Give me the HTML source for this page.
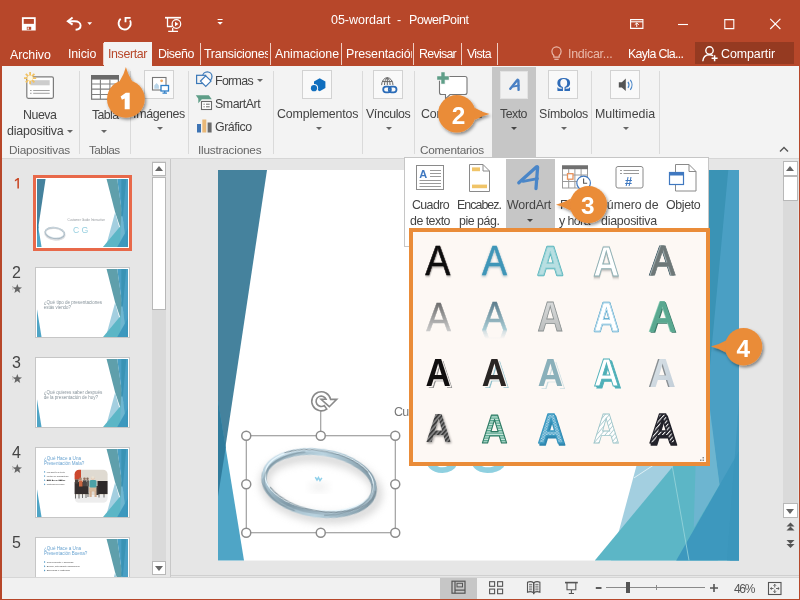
<!DOCTYPE html>
<html><head><meta charset="utf-8"><title>PowerPoint</title>
<style>
*{box-sizing:border-box;margin:0;padding:0}
html,body{width:800px;height:600px;overflow:hidden;background:#e6e6e6;font-family:"Liberation Sans",sans-serif;font-size:12px;color:#444}
#win{position:absolute;left:0;top:0;width:800px;height:600px;overflow:hidden;background:#e6e6e6}
#win div,#win svg{position:absolute}
#win .t,#win svg{will-change:transform}
</style></head><body>
<div id="win">
<!-- s_title -->
<div style="position:absolute;left:0;top:0;width:800px;height:66px;background:#b7472a"></div>
<div class="t" style="left:330.50px;top:12.00px;font-size:12.5px;line-height:16px;color:#fff;white-space:nowrap;letter-spacing:-0.034px;">05-wordart</div>
<div class="t" style="left:397.00px;top:12.00px;font-size:12.5px;line-height:16px;color:#fff;white-space:nowrap;letter-spacing:-0.162px;">-</div>
<div class="t" style="left:408.50px;top:12.00px;font-size:12.5px;line-height:16px;color:#fff;white-space:nowrap;letter-spacing:-0.442px;">PowerPoint</div>
<div style="position:absolute;left:104px;top:42px;width:48px;height:25px;background:#f3f3f3"></div>
<div style="position:absolute;left:103px;top:42.500px;width:1px;height:22px;background:#efcdc3"></div>
<div style="position:absolute;left:200px;top:42.500px;width:1px;height:22px;background:#efcdc3"></div>
<div style="position:absolute;left:270px;top:42.500px;width:1px;height:22px;background:#efcdc3"></div>
<div style="position:absolute;left:341px;top:42.500px;width:1px;height:22px;background:#efcdc3"></div>
<div style="position:absolute;left:413px;top:42.500px;width:1px;height:22px;background:#efcdc3"></div>
<div style="position:absolute;left:461px;top:42.500px;width:1px;height:22px;background:#efcdc3"></div>
<div style="position:absolute;left:497px;top:42.500px;width:1px;height:22px;background:#efcdc3"></div>
<div class="t" style="left:9.50px;top:47.00px;font-size:12.4px;line-height:16px;color:#fff;white-space:nowrap;letter-spacing:-0.078px;">Archivo</div>
<div class="t" style="left:67.50px;top:46.00px;font-size:12.4px;line-height:16px;color:#fff;white-space:nowrap;letter-spacing:-0.108px;">Inicio</div>
<div class="t" style="left:107.50px;top:46.00px;font-size:12.4px;line-height:16px;color:#b7472a;white-space:nowrap;letter-spacing:-0.379px;">Insertar</div>
<div class="t" style="left:157.50px;top:46.00px;font-size:12.4px;line-height:16px;color:#fff;white-space:nowrap;letter-spacing:-0.433px;">Diseño</div>
<div class="t" style="left:203.50px;top:46.00px;font-size:12.4px;line-height:16px;color:#fff;white-space:nowrap;letter-spacing:-0.298px;width:64px;overflow:hidden;">Transiciones</div>
<div class="t" style="left:274.50px;top:46.00px;font-size:12.4px;line-height:16px;color:#fff;white-space:nowrap;letter-spacing:-0.079px;width:64px;overflow:hidden;">Animaciones</div>
<div class="t" style="left:346.00px;top:46.00px;font-size:12.4px;line-height:16px;color:#fff;white-space:nowrap;letter-spacing:-0.089px;width:65.5px;overflow:hidden;">Presentación</div>
<div class="t" style="left:418.50px;top:46.00px;font-size:12.4px;line-height:16px;color:#fff;white-space:nowrap;letter-spacing:-0.719px;">Revisar</div>
<div class="t" style="left:467.00px;top:46.00px;font-size:12.4px;line-height:16px;color:#fff;white-space:nowrap;letter-spacing:-0.668px;">Vista</div>
<div class="t" style="left:568.10px;top:46.00px;font-size:12.4px;line-height:16px;color:#e9b9ab;white-space:nowrap;letter-spacing:-0.247px;">Indicar...</div>
<div class="t" style="left:628.20px;top:46.00px;font-size:12.4px;line-height:16px;color:#fff;white-space:nowrap;letter-spacing:-0.675px;">Kayla Cla...</div>
<div style="position:absolute;left:695px;top:42px;width:98.5px;height:22px;background:#953a21"></div>
<div class="t" style="left:720.50px;top:46.00px;font-size:12.4px;line-height:16px;color:#fff;white-space:nowrap;letter-spacing:-0.048px;">Compartir</div>
<svg style="position:absolute;left:0;top:0" width="800" height="66" viewBox="0 0 800 66" fill="none" stroke="#fff" stroke-width="1.5">
<!-- save -->
<rect x="22.800" y="18.100" width="12" height="11.500" stroke-width="1.800"/><path d="M22.800 24.900h12" stroke-width="2.100"/><rect x="23" y="25" width="11.600" height="4.800" fill="#fff" stroke="none"/><rect x="26.800" y="26.800" width="4.400" height="3" fill="#b7472a" stroke="none"/><rect x="27.600" y="27.400" width="1.200" height="2" fill="#fff" stroke="none"/>
<!-- undo -->
<path d="M72.600 17.400l-4.800 3.800 4.800 3.400" stroke-width="1.900"/><path d="M68.200 21.200h6.600c3.400 0 5.800 1.800 5.800 4.400 0 2.400-2 4-5 4.200" stroke-width="1.900"/>
<path d="M87.300 22.200h4.800l-2.400 2.700z" fill="#fff" stroke="none"/>
<!-- redo -->
<path d="M120.700 18.800A6.100 6.100 0 1 0 130 20.400" stroke-width="1.900"/><path d="M130.600 17.800h-5.100v4.500" stroke-width="1.800"/>
<!-- slideshow -->
<path d="M165 17.700h16" stroke-width="1.700"/><path d="M167.500 18v8.500h4.800" stroke-width="1.300"/><path d="M172.700 28v3M168.200 31.300h9.800" stroke-width="1.300"/>
<circle cx="176.400" cy="24" r="4.300" stroke-width="1.200"/><path d="M175 21.800l3.500 2.200-3.500 2.200z" fill="#fff" stroke="none"/>
<!-- customize -->
<path d="M217.600 19.500h5" stroke-width="1"/><path d="M217.400 22h5.400l-2.700 2.800z" fill="#fff" stroke="none"/>
<!-- ribbon display -->
<path d="M630.600 19.600h12.300v8.800h-12.300z" stroke-width="1.100"/><path d="M630.600 21.800h12.300" stroke-width="1.100"/><path d="M636.750 27v-4M634.700 24.800l2.050-1.900 2.050 1.900" stroke-width="1"/>
<!-- minimize -->
<path d="M678 24.500h10" stroke-width="1.100"/>
<!-- maximize -->
<path d="M724.800 19.600h9v9h-9z" stroke-width="1.100"/>
<!-- close -->
<path d="M770.200 18.800l10.200 10.200M780.400 18.800l-10.200 10.200" stroke-width="1.100"/>
<!-- bulb -->
<g stroke="#e9b9ab" stroke-width="1.200"><path d="M553.800 55.500c-1.400-1.300-1.900-2.500-1.900-4 0-2.600 2.100-4.600 4.600-4.600s4.600 2 4.600 4.600c0 1.500-.5 2.700-1.900 4v1.600h-5.400z"/><path d="M554.300 59.300h4.400"/></g>
<!-- person -->
<g stroke-width="1.400"><circle cx="709.500" cy="50.500" r="3.700"/><path d="M702.800 61.300c.4-4.300 3-6.600 6.700-6.600 1.500 0 2.600.3 3.600 1"/><path d="M714.600 55.200v6M711.600 58.200h6" stroke-width="1.500"/></g>
</svg>
<!-- s_ribbon -->
<div style="left:0;top:66px;width:800px;height:91.500px;background:#f3f3f3"></div>
<div style="left:0;top:157.500px;width:800px;height:1px;background:#d6d6d6"></div>
<div style="left:492px;top:67px;width:43.500px;height:90.500px;background:#c6c6c6"></div>
<div style="left:79px;top:71px;width:1px;height:83px;background:#dadada"></div>
<div style="left:130px;top:71px;width:1px;height:83px;background:#dadada"></div>
<div style="left:188px;top:71px;width:1px;height:83px;background:#dadada"></div>
<div style="left:273px;top:71px;width:1px;height:83px;background:#dadada"></div>
<div style="left:362px;top:71px;width:1px;height:83px;background:#dadada"></div>
<div style="left:414px;top:71px;width:1px;height:83px;background:#dadada"></div>
<div style="left:590.5px;top:71px;width:1px;height:83px;background:#dadada"></div>
<div style="left:659px;top:71px;width:1px;height:83px;background:#dadada"></div>
<div class="t" style="left:9.10px;top:142.00px;font-size:11.8px;line-height:16px;color:#666;white-space:nowrap;letter-spacing:-0.226px;">Diapositivas</div>
<div class="t" style="left:88.80px;top:142.00px;font-size:11.8px;line-height:16px;color:#666;white-space:nowrap;letter-spacing:-0.568px;">Tablas</div>
<div class="t" style="left:198.10px;top:142.00px;font-size:11.8px;line-height:16px;color:#666;white-space:nowrap;letter-spacing:-0.218px;">Ilustraciones</div>
<div class="t" style="left:420.20px;top:142.00px;font-size:11.8px;line-height:16px;color:#666;white-space:nowrap;letter-spacing:-0.272px;">Comentarios</div>
<svg style="left:779px;top:146px" width="10" height="7" viewBox="0 0 10 7"><path d="M1 5.500l4-4 4 4" fill="none" stroke="#555" stroke-width="1.400"/></svg>
<div class="t" style="left:23.00px;top:107.00px;font-size:12.4px;line-height:16px;color:#444;white-space:nowrap;letter-spacing:-0.468px;">Nueva</div>
<div class="t" style="left:6.90px;top:123.00px;font-size:12.4px;line-height:16px;color:#444;white-space:nowrap;letter-spacing:-0.181px;">diapositiva</div>
<svg style="left:66.5px;top:129.5px" width="6" height="3" viewBox="0 0 6 3"><path d="M0 0h6l-3 3z" fill="#666"/></svg>
<div class="t" style="left:91.50px;top:107.00px;font-size:12.4px;line-height:16px;color:#444;white-space:nowrap;letter-spacing:-0.628px;">Tabla</div>
<svg style="left:101.3px;top:129.5px" width="6" height="3" viewBox="0 0 6 3"><path d="M0 0h6l-3 3z" fill="#666"/></svg>
<div style="left:144.2px;top:70.2px;width:29.6px;height:28.8px;background:#f9f9f9;border:1px solid #d2d2d2"></div>
<div class="t" style="left:132.50px;top:106.00px;font-size:12.4px;line-height:16px;color:#444;white-space:nowrap;letter-spacing:-0.306px;">Imágenes</div>
<svg style="left:156.5px;top:127px" width="6" height="3" viewBox="0 0 6 3"><path d="M0 0h6l-3 3z" fill="#666"/></svg>
<div class="t" style="left:215.25px;top:73.00px;font-size:12.4px;line-height:16px;color:#444;white-space:nowrap;letter-spacing:-0.679px;">Formas</div>
<svg style="left:256.5px;top:79px" width="6" height="3" viewBox="0 0 6 3"><path d="M0 0h6l-3 3z" fill="#666"/></svg>
<div class="t" style="left:215.25px;top:96.00px;font-size:12.4px;line-height:16px;color:#444;white-space:nowrap;letter-spacing:-0.458px;">SmartArt</div>
<div class="t" style="left:215.25px;top:119.00px;font-size:12.4px;line-height:16px;color:#444;white-space:nowrap;letter-spacing:-0.459px;">Gráfico</div>
<div style="left:302.3px;top:70.2px;width:29.5px;height:28.8px;background:#f9f9f9;border:1px solid #d2d2d2"></div>
<div class="t" style="left:277.00px;top:106.00px;font-size:12.4px;line-height:16px;color:#444;white-space:nowrap;letter-spacing:-0.166px;">Complementos</div>
<svg style="left:315.5px;top:127px" width="6" height="3" viewBox="0 0 6 3"><path d="M0 0h6l-3 3z" fill="#666"/></svg>
<div style="left:373.4px;top:70.2px;width:29.6px;height:28.8px;background:#f9f9f9;border:1px solid #d2d2d2"></div>
<div class="t" style="left:366.10px;top:106.00px;font-size:12.4px;line-height:16px;color:#444;white-space:nowrap;letter-spacing:-0.395px;">Vínculos</div>
<svg style="left:385.5px;top:127px" width="6" height="3" viewBox="0 0 6 3"><path d="M0 0h6l-3 3z" fill="#666"/></svg>
<div class="t" style="left:420.50px;top:106.00px;font-size:12.4px;line-height:16px;color:#444;white-space:nowrap;letter-spacing:-0.209px;">Comentario</div>
<div style="left:499.5px;top:70.5px;width:28px;height:28.25px;background:#f1f1f1;border:1px solid #e3e3e3"></div>
<div class="t" style="left:500.00px;top:106.00px;font-size:12.4px;line-height:16px;color:#444;white-space:nowrap;letter-spacing:-0.527px;">Texto</div>
<svg style="left:510.5px;top:127px" width="6" height="3" viewBox="0 0 6 3"><path d="M0 0h6l-3 3z" fill="#444"/></svg>
<div style="left:548px;top:70.2px;width:29.5px;height:28.8px;background:#f9f9f9;border:1px solid #d2d2d2"></div>
<div class="t" style="left:538.50px;top:106.00px;font-size:12.4px;line-height:16px;color:#444;white-space:nowrap;letter-spacing:-0.336px;">Símbolos</div>
<svg style="left:560.5px;top:127px" width="6" height="3" viewBox="0 0 6 3"><path d="M0 0h6l-3 3z" fill="#666"/></svg>
<div style="left:610px;top:70.2px;width:29.5px;height:28.8px;background:#f9f9f9;border:1px solid #d2d2d2"></div>
<div class="t" style="left:595.00px;top:106.00px;font-size:12.4px;line-height:16px;color:#444;white-space:nowrap;letter-spacing:0.030px;">Multimedia</div>
<svg style="left:622.5px;top:127px" width="6" height="3" viewBox="0 0 6 3"><path d="M0 0h6l-3 3z" fill="#666"/></svg>
<svg style="left:0;top:66px" width="800" height="92" viewBox="0 66 800 92" fill="none">
<!-- new slide -->
<rect x="26.800" y="76.800" width="26.600" height="21.500" rx="1.500" fill="#fdfdfd" stroke="#7c7c7c" stroke-width="1.200"/>
<rect x="30.400" y="80.200" width="19.300" height="5.100" fill="#cdcdcd"/>
<path d="M30 90.500h1.600M33.200 90.500h16.500M30 93.300h1.600M33.200 93.300h16.500" stroke="#a0a0a0" stroke-width="1"/>
<g stroke="#f1c264" stroke-width="1.800"><path d="M30.100 72v12.200M24 78.100h12.200M25.800 73.800l8.600 8.600M34.400 73.800l-8.600 8.600"/></g>
<circle cx="30.100" cy="78.100" r="2.700" fill="#fdf7e4"/>
<!-- table -->
<rect x="91.600" y="75.600" width="26.800" height="23.600" fill="#fff" stroke="#7a7a7a" stroke-width="1.200"/>
<rect x="91" y="75" width="28" height="4.600" fill="#6a6a6a"/>
<path d="M100.400 79.500v19.700M109.900 79.500v19.700M91.600 84h26.800M91.600 89.100h26.800M91.600 94.500h26.800" stroke="#808080" stroke-width="1.100"/>
<!-- imagenes -->
<rect x="152.500" y="77.500" width="13.500" height="12.500" fill="#fff" stroke="#777" stroke-width="1.100"/>
<circle cx="161.600" cy="80.800" r="1.400" fill="#f0a860"/>
<path d="M154.300 88.800v-3.200l2.300-2.600 2.300 2.600v3.200z" fill="#b8d4e8"/>
<rect x="161" y="85.500" width="7.500" height="5.500" fill="#fff" stroke="#2f7fc8" stroke-width="1.300"/><path d="M164.750 91v2M162.500 93.200h4.500" stroke="#2f7fc8" stroke-width="1.200"/>
<!-- formas -->
<circle cx="207.300" cy="76.500" r="4.700" fill="#f3f3f3" stroke="#3b78b8" stroke-width="1.200"/>
<rect x="196.600" y="75.300" width="9" height="8.200" fill="#f3f3f3" stroke="#3b78b8" stroke-width="1.200"/>
<path d="M205.750 75.900l5.300 5.200-5.300 5.300-5.300-5.300z" fill="#fff" stroke="#3b78b8" stroke-width="1.200"/>
<!-- smartart -->
<path d="M195.800 95.300h13l3 4h-10l-3.500 4v-4.500z" fill="#5f9e88"/>
<rect x="201.500" y="101.500" width="10" height="8" fill="#fff" stroke="#6a6a6a" stroke-width="1.100"/>
<path d="M203.500 104.200h1.200M206 104.200h3.700M203.500 106.800h1.200M206 106.800h3.700" stroke="#6a6a6a" stroke-width="1"/>
<!-- grafico -->
<rect x="197" y="124" width="4" height="8.500" fill="#3e74b4"/><rect x="202.300" y="119.500" width="4" height="13" fill="#e9b878"/><rect x="207.600" y="122.500" width="4" height="10" fill="#6b6b6b"/>
<!-- complementos -->
<path d="M319.700 78.300l5.700 3.200v6.600l-5.700 3.200-5.700-3.200v-6.600z" fill="#106ebe"/>
<circle cx="314" cy="88.200" r="4.100" fill="#f9f9f9"/><circle cx="314" cy="88.200" r="3.100" fill="#106ebe"/>
<!-- vinculos -->
<g stroke="#666" stroke-width="1"><path d="M381.600 85.300a5.700 7.600 0 0 1 11.400 0"/><path d="M387.300 77.700v7.600M384.500 85.300c0-3.600 1-6.300 2.800-7.600 1.800 1.300 2.800 4 2.800 7.600M382.300 81.600h10"/></g>
<rect x="380.500" y="85.300" width="18" height="8.500" fill="#f9f9f9"/>
<g stroke="#2b6cb8" stroke-width="1.800"><rect x="383.200" y="86.700" width="7.700" height="5.600" rx="2.800"/><rect x="388.800" y="86.700" width="7.700" height="5.600" rx="2.800"/></g>
<!-- comentario -->
<path d="M441.500 76.500h23.500a2 2 0 0 1 2 2v14a2 2 0 0 1 -2 2h-15l-4.500 4.500v-4.500h-4a2 2 0 0 1 -2 -2v-14a2 2 0 0 1 2 -2z" fill="#fff" stroke="#777" stroke-width="1.100"/>
<path d="M443 71.600v12.800M436.600 78h12.800" stroke="#f3f3f3" stroke-width="5.500"/>
<path d="M443 72.200v11.600M437.200 78h11.600" stroke="#5f9e88" stroke-width="3.400"/>
<!-- texto A -->
<path d="M510.300 88.800l6.800-8.600c.5-.7 1.300-.5 1.300.4l.2 9.300" stroke="#4a80c4" stroke-width="2.400" stroke-linecap="round" stroke-linejoin="round" fill="none"/><path d="M513 86.600l5.600-1.100" stroke="#4a80c4" stroke-width="1.900" stroke-linecap="round"/>
<!-- omega -->
<text x="556.500" y="90.800" font-family="Liberation Serif" font-weight="bold" font-size="18" fill="#2f6cb8">Ω</text>
<!-- speaker -->
<path d="M618.800 82.200h3l4-3.600v12.400l-4-3.600h-3z" fill="#555"/>
<path d="M628 81.800c1.200 1.800 1.200 4.200 0 6M630.300 79.800c2.200 2.900 2.200 7.100 0 10" stroke="#4a86c8" stroke-width="1.200"/>
</svg>
<!-- s_left -->
<div style="left:169.500px;top:159px;width:1px;height:418px;background:#c8c8c8"></div>
<div style="left:151.500px;top:161px;width:14px;height:413px;background:#dadada"></div>
<div style="left:151.500px;top:161.500px;width:14px;height:14.500px;background:#fff;border:1px solid #b8b8b8"></div>
<svg style="left:154.500px;top:166px" width="8" height="5" viewBox="0 0 8 5"><path d="M0 5h8l-4-5z" fill="#666"/></svg>
<div style="left:151.500px;top:176.500px;width:14px;height:133px;background:#fff;border:1px solid #b8b8b8"></div>
<div style="left:151.500px;top:560.500px;width:14px;height:14px;background:#fff;border:1px solid #b8b8b8"></div>
<svg style="left:154.500px;top:565.500px" width="8" height="5" viewBox="0 0 8 5"><path d="M0 0h8l-4 5z" fill="#666"/></svg>
<div style="left:33.200px;top:175px;width:99px;height:76px;background:#fff;border:3px solid #e8694a"></div>
<svg style="left:37px;top:179px" width="91.2" height="68" viewBox="218 169.500 521 390.500" preserveAspectRatio="none"><rect x="218" y="169.500" width="521" height="390.500" fill="#fff"/>
<path d="M218 169.500H267L218 496z" fill="#45829d"/>
<path d="M218 400L244 560H218z" fill="#4fa5c6"/>
<path d="M218 400L225.700 447 218 496z" fill="#2f7b9c"/>
<path d="M615.500 169.500H676.500L706.800 384 696 455 664.500 361z" fill="#5f9fab"/>
<path d="M664.500 361L611 560H718z" fill="#a3cfe0"/>
<path d="M594.800 560L739 386.300V560z" fill="#5cb6c6"/>
<path d="M676.500 169.500H739V560H729.800z" fill="#4a9fc4"/>
<path d="M700 169.500H728.300L700.500 466H700z" fill="#3a93b5"/>
<path d="M698 384H706.800L719.500 484.600 693.700 527.800z" fill="#6db5d0"/>
<path d="M676.200 560L739 450.500V560z" fill="#3d98be"/>
<path d="M739 400V560H727z" fill="#3a94ba" opacity=".6"/>
</svg>
<div style="left:35.200px;top:267.1px;width:94.600px;height:71.3px;background:#fff;border:1px solid #c6c6c6"></div>
<svg style="left:36.9px;top:268.9px" width="91.2" height="68.1" viewBox="218 169.500 521 390.500" preserveAspectRatio="none"><rect x="218" y="169.500" width="521" height="390.500" fill="#fff"/>
<path d="M218 400L244 560H218z" fill="#4fa5c6"/>
<path d="M615.500 169.500H676.500L706.800 384 696 455 664.500 361z" fill="#5f9fab"/>
<path d="M664.500 361L611 560H718z" fill="#a3cfe0"/>
<path d="M594.800 560L739 386.300V560z" fill="#5cb6c6"/>
<path d="M676.500 169.500H739V560H729.800z" fill="#4a9fc4"/>
<path d="M700 169.500H728.300L700.500 466H700z" fill="#3a93b5"/>
<path d="M698 384H706.800L719.500 484.600 693.700 527.800z" fill="#6db5d0"/>
<path d="M676.200 560L739 450.500V560z" fill="#3d98be"/>
<path d="M739 400V560H727z" fill="#3a94ba" opacity=".6"/>
</svg>
<div style="left:35.200px;top:357.1px;width:94.600px;height:71.3px;background:#fff;border:1px solid #c6c6c6"></div>
<svg style="left:36.9px;top:358.9px" width="91.2" height="68.1" viewBox="218 169.500 521 390.500" preserveAspectRatio="none"><rect x="218" y="169.500" width="521" height="390.500" fill="#fff"/>
<path d="M218 400L244 560H218z" fill="#4fa5c6"/>
<path d="M615.500 169.500H676.500L706.800 384 696 455 664.500 361z" fill="#5f9fab"/>
<path d="M664.500 361L611 560H718z" fill="#a3cfe0"/>
<path d="M594.800 560L739 386.300V560z" fill="#5cb6c6"/>
<path d="M676.500 169.500H739V560H729.800z" fill="#4a9fc4"/>
<path d="M700 169.500H728.300L700.500 466H700z" fill="#3a93b5"/>
<path d="M698 384H706.800L719.500 484.600 693.700 527.800z" fill="#6db5d0"/>
<path d="M676.200 560L739 450.500V560z" fill="#3d98be"/>
<path d="M739 400V560H727z" fill="#3a94ba" opacity=".6"/>
</svg>
<div style="left:35.200px;top:447.1px;width:94.600px;height:71.3px;background:#fff;border:1px solid #c6c6c6"></div>
<svg style="left:36.9px;top:448.9px" width="91.2" height="68.1" viewBox="218 169.500 521 390.500" preserveAspectRatio="none"><rect x="218" y="169.500" width="521" height="390.500" fill="#fff"/>
<path d="M218 400L244 560H218z" fill="#4fa5c6"/>
<path d="M615.500 169.500H676.500L706.800 384 696 455 664.500 361z" fill="#5f9fab"/>
<path d="M664.500 361L611 560H718z" fill="#a3cfe0"/>
<path d="M594.800 560L739 386.300V560z" fill="#5cb6c6"/>
<path d="M676.500 169.500H739V560H729.800z" fill="#4a9fc4"/>
<path d="M700 169.500H728.300L700.500 466H700z" fill="#3a93b5"/>
<path d="M698 384H706.800L719.500 484.600 693.700 527.800z" fill="#6db5d0"/>
<path d="M676.200 560L739 450.500V560z" fill="#3d98be"/>
<path d="M739 400V560H727z" fill="#3a94ba" opacity=".6"/>
</svg>
<div style="left:35.200px;top:537.1px;width:94.600px;height:41px;background:#fff;border:1px solid #c6c6c6"></div>
<div style="left:36.900px;top:538.900px;width:91.200px;height:38.100px;overflow:hidden"><svg style="left:0px;top:0px" width="91.2" height="68.1" viewBox="218 169.500 521 390.500" preserveAspectRatio="none"><rect x="218" y="169.500" width="521" height="390.500" fill="#fff"/>
<path d="M218 400L244 560H218z" fill="#4fa5c6"/>
<path d="M615.500 169.500H676.500L706.800 384 696 455 664.500 361z" fill="#5f9fab"/>
<path d="M664.500 361L611 560H718z" fill="#a3cfe0"/>
<path d="M594.800 560L739 386.300V560z" fill="#5cb6c6"/>
<path d="M676.500 169.500H739V560H729.800z" fill="#4a9fc4"/>
<path d="M700 169.500H728.300L700.500 466H700z" fill="#3a93b5"/>
<path d="M698 384H706.800L719.500 484.600 693.700 527.800z" fill="#6db5d0"/>
<path d="M676.200 560L739 450.500V560z" fill="#3d98be"/>
<path d="M739 400V560H727z" fill="#3a94ba" opacity=".6"/>
</svg></div>
<svg style="left:10px;top:170px" width="20" height="25" viewBox="10 170 20 25"><path d="M18.900 178v10.500h-1.500v-8.600l-2.500 1.500v-1.500l2.800-1.900z" fill="#c8421f"/></svg>
<div class="t" style="left:11.50px;top:264.50px;font-size:16px;line-height:16px;color:#444;white-space:nowrap;letter-spacing:0.102px;">2</div>
<svg style="left:11.5px;top:283.8px" width="10" height="9" viewBox="0 0 10 9"><path d="M5.300 0l1.200 3.200 3.500.2-2.700 2.200.9 3.400-2.900-1.900-2.900 1.900.9-3.400-2.700-2.200 3.500-.2z" fill="#666"/><path d="M0 2.800h1.300M.3 5h1" stroke="#888" stroke-width=".7"/></svg>
<div class="t" style="left:11.50px;top:354.50px;font-size:16px;line-height:16px;color:#444;white-space:nowrap;letter-spacing:0.102px;">3</div>
<svg style="left:11.5px;top:373.8px" width="10" height="9" viewBox="0 0 10 9"><path d="M5.300 0l1.200 3.200 3.500.2-2.700 2.200.9 3.400-2.900-1.900-2.900 1.900.9-3.400-2.700-2.200 3.500-.2z" fill="#666"/><path d="M0 2.800h1.300M.3 5h1" stroke="#888" stroke-width=".7"/></svg>
<div class="t" style="left:11.50px;top:444.50px;font-size:16px;line-height:16px;color:#444;white-space:nowrap;letter-spacing:0.102px;">4</div>
<svg style="left:11.5px;top:463.8px" width="10" height="9" viewBox="0 0 10 9"><path d="M5.300 0l1.200 3.200 3.500.2-2.700 2.200.9 3.400-2.900-1.900-2.900 1.900.9-3.400-2.700-2.200 3.500-.2z" fill="#666"/><path d="M0 2.800h1.300M.3 5h1" stroke="#888" stroke-width=".7"/></svg>
<div class="t" style="left:11.50px;top:534.50px;font-size:16px;line-height:16px;color:#444;white-space:nowrap;letter-spacing:0.102px;">5</div>
<svg style="left:30px;top:170px;opacity:.92" width="110" height="407" viewBox="30 170 110 407" font-family="Liberation Sans"><text x="67.5" y="221.3" font-size="2.6" fill="#8a8f94" textLength="37.5" lengthAdjust="spacingAndGlyphs">Customer Guide Interactive</text>
<text x="73" y="232.8" font-size="9" fill="#8ecbdd" textLength="6.2" lengthAdjust="spacingAndGlyphs">C</text><text x="81.5" y="232.8" font-size="9" fill="#8ecbdd" textLength="6.8" lengthAdjust="spacingAndGlyphs">G</text>
<g transform="rotate(8 54.800 233)"><ellipse cx="55" cy="234" rx="10" ry="5.800" fill="none" stroke="#c9ccd0" stroke-width="1.600" opacity=".7"/><ellipse cx="54.800" cy="233" rx="9.600" ry="5.400" fill="none" stroke="#9fb0bb" stroke-width="1.400"/><ellipse cx="54.800" cy="232.600" rx="9.300" ry="5.100" fill="none" stroke="#e4f0f6" stroke-width=".5"/></g>
<text x="43.75" y="304.2" font-size="4.5" fill="#7d8a92" textLength="58.4" lengthAdjust="spacingAndGlyphs">¿Qué tipo de presentaciones</text>
<text x="43.75" y="309.4" font-size="4.5" fill="#7d8a92" textLength="27.2" lengthAdjust="spacingAndGlyphs">estás viendo?</text>
<text x="43.75" y="394.2" font-size="4.5" fill="#7d8a92" textLength="58.6" lengthAdjust="spacingAndGlyphs">¿Qué quieres saber después</text>
<text x="43.75" y="399.4" font-size="4.5" fill="#7d8a92" textLength="54.4" lengthAdjust="spacingAndGlyphs">de la presentación de hoy?</text>
<text x="44" y="459.8" font-size="4.6" fill="#5a9acc" textLength="37" lengthAdjust="spacingAndGlyphs">¿Qué Hace a Una</text>
<text x="44" y="465.4" font-size="4.6" fill="#5a9acc" textLength="40.2" lengthAdjust="spacingAndGlyphs">Presentación Mala?</text>
<path d="M44 471l1.500 .9-1.500 .9z" fill="#3f8fc0"/>
<text x="46.8" y="472.7" font-size="2.5" fill="#333" textLength="18" lengthAdjust="spacingAndGlyphs">Mal diseño de texto</text>
<path d="M44 475.15l1.500 .9-1.500 .9z" fill="#3f8fc0"/>
<text x="46.8" y="476.85" font-size="2.5" fill="#333" textLength="21.5" lengthAdjust="spacingAndGlyphs">Lector de diapositivas</text>
<path d="M44 479.3l1.500 .9-1.500 .9z" fill="#3f8fc0"/>
<text x="46.8" y="481" font-size="2.5" fill="#333" textLength="18.5" lengthAdjust="spacingAndGlyphs" font-weight="bold">■■■ ■uchi ■■■as</text>
<path d="M44 483.45l1.500 .9-1.500 .9z" fill="#3f8fc0"/>
<text x="46.8" y="485.15" font-size="2.5" fill="#333" textLength="17.8" lengthAdjust="spacingAndGlyphs">Contenido innecesario</text>
<clipPath id="phc"><rect x="74.600" y="469.700" width="33" height="33" rx="4.500"/></clipPath>
<filter id="phb" x="-5%" y="-5%" width="110%" height="110%"><feGaussianBlur stdDeviation=".6"/></filter>
<g clip-path="url(#phc)"><g filter="url(#phb)">
<rect x="72" y="467" width="38" height="38" fill="#ddd7cd"/>
<rect x="72" y="467" width="9" height="12.500" fill="#c8381a"/>
<rect x="72" y="495" width="38" height="11" fill="#ececec"/>
<rect x="74" y="482" width="14.500" height="12" fill="#221e1c"/>
<rect x="75" y="479.500" width="3.500" height="4" fill="#3a2e2a"/><circle cx="80.500" cy="479" r="1.400" fill="#a87a60"/><rect x="79" y="480.500" width="3.500" height="6" fill="#c85a30"/>
<circle cx="84.500" cy="478.800" r="1.300" fill="#8a6450"/><rect x="83" y="480.300" width="3.200" height="6" fill="#3a3634"/>
<circle cx="87.500" cy="478.800" r="1.200" fill="#7a5a48"/><rect x="86.400" y="480.300" width="2.600" height="6" fill="#55504c"/>
<rect x="89.500" y="480" width="7" height="8" rx="1.500" fill="#3a9aa0"/><circle cx="92.800" cy="478.200" r="1.700" fill="#e4c4ac"/><circle cx="92.800" cy="477.400" r="1.400" fill="#e8e0d0"/>
<rect x="89" y="487.500" width="8.500" height="4" fill="#d4b494"/><rect x="89.500" y="491" width="2.200" height="6" fill="#d0a888"/><rect x="94.500" y="491" width="2.200" height="6" fill="#d0a888"/>
<rect x="97.500" y="481" width="11" height="13" fill="#1c1816"/><rect x="96.500" y="486" width="2" height="9" fill="#2a2624"/>
<path d="M75.500 494v4.500M79 494v4.500M82.500 494v4M86 494v4M88 493v4M99 494v3.500M104 494v3.500" stroke="#2a2624" stroke-width=".7"/>
</g></g>
<text x="44" y="549.8" font-size="4.6" fill="#5a9acc" textLength="37" lengthAdjust="spacingAndGlyphs">¿Qué Hace a Una</text>
<text x="44" y="555.4" font-size="4.6" fill="#5a9acc" textLength="43.4" lengthAdjust="spacingAndGlyphs">Presentación Buena?</text>
<path d="M44 561.1l1.500 .9-1.500 .9z" fill="#3f8fc0"/>
<text x="46.8" y="562.8" font-size="2.5" fill="#333" textLength="26.5" lengthAdjust="spacingAndGlyphs">Conocimiento y habilidad</text>
<path d="M44 565.35l1.500 .9-1.500 .9z" fill="#3f8fc0"/>
<text x="46.8" y="567.05" font-size="2.5" fill="#333" textLength="33" lengthAdjust="spacingAndGlyphs">Buena, interesante información</text>
<path d="M44 569.6l1.500 .9-1.500 .9z" fill="#3f8fc0"/>
<text x="46.8" y="571.3" font-size="2.5" fill="#333" textLength="23" lengthAdjust="spacingAndGlyphs">Ejemplos e historias</text></svg>
<!-- s_main -->
<div style="left:783px;top:161px;width:14.500px;height:356px;background:#dadada"></div>
<div style="left:783px;top:161px;width:14.500px;height:14.500px;background:#fff;border:1px solid #b8b8b8"></div>
<svg style="left:786.250px;top:166px" width="8" height="5" viewBox="0 0 8 5"><path d="M0 5h8l-4-5z" fill="#666"/></svg>
<div style="left:783px;top:176px;width:14.500px;height:24.500px;background:#fff;border:1px solid #b8b8b8"></div>
<div style="left:783px;top:503px;width:14.500px;height:14.500px;background:#fff;border:1px solid #b8b8b8"></div>
<svg style="left:786.250px;top:508.500px" width="8" height="5" viewBox="0 0 8 5"><path d="M0 0h8l-4 5z" fill="#666"/></svg>
<svg style="left:785px;top:521px" width="11" height="30" viewBox="0 0 11 30" fill="#555"><path d="M5.500 1.500l4 4h-8zM5.500 5.500l4 4h-8z"/><path d="M1.500 19h8l-4 4zM1.500 23h8l-4 4z"/><path d="M1 1.500h0" /></svg>
<div style="left:171px;top:574.500px;width:629px;height:1px;background:#d0d0d0"></div>
<svg style="left:218px;top:169.500px" width="521" height="390.500" viewBox="218 169.500 521 390.500">
<rect x="218" y="169.500" width="521" height="390.500" fill="#fff"/>
<path d="M218 169.500H267L218 496z" fill="#45829d"/>
<path d="M218 400L244 560H218z" fill="#4fa5c6"/>
<path d="M218 400L225.700 447 218 496z" fill="#2f7b9c"/>
<path d="M615.500 169.500H676.500L706.800 384 696 455 664.500 361z" fill="#5f9fab"/>
<path d="M664.500 361L611 560H718z" fill="#a3cfe0"/>
<path d="M594.800 560L739 386.300V560z" fill="#5cb6c6"/>
<path d="M676.500 169.500H739V560H729.800z" fill="#4a9fc4"/>
<path d="M700 169.500H728.300L700.500 466H700z" fill="#3a93b5"/>
<path d="M698 384H706.800L719.500 484.600 693.700 527.800z" fill="#6db5d0"/>
<path d="M676.200 560L739 450.500V560z" fill="#3d98be"/>
<path d="M739 400V560H727z" fill="#3a94ba" opacity=".6"/>
<path d="M672.300 466L689 560" stroke="#9ad6dc" stroke-width=".8" fill="none"/>
<path d="M634 477.400L656 463" stroke="#eef7fa" stroke-width=".8" fill="none"/>
<!-- CG text -->
<text x="423" y="472.500" font-family="Liberation Sans" font-weight="bold" font-size="50" fill="#8fd0e0" letter-spacing="9">CG</text>
</svg>
<div class="t" style="left:394.00px;top:404.00px;font-size:12.5px;line-height:16px;color:#777;white-space:nowrap;letter-spacing:-0.739px;">Cu</div>
<svg style="left:230px;top:385px" width="190" height="160" viewBox="230 385 190 160" fill="none">
<defs>
<filter id="rb" x="-20%" y="-30%" width="140%" height="160%"><feGaussianBlur stdDeviation="4"/></filter>
<filter id="rb2" x="-20%" y="-30%" width="140%" height="160%"><feGaussianBlur stdDeviation=".6"/></filter>
<linearGradient id="rg" x1="0" y1="0" x2="1" y2="1"><stop offset="0" stop-color="#dff0fa"/><stop offset=".35" stop-color="#a9c4d2"/><stop offset=".6" stop-color="#7f98a6"/><stop offset="1" stop-color="#cfe4f0"/></linearGradient>
<linearGradient id="rg2" x1="0" y1="0" x2="1" y2="0"><stop offset="0" stop-color="#8aa3b0"/><stop offset=".5" stop-color="#b9d3e0"/><stop offset="1" stop-color="#7d95a2"/></linearGradient>
</defs>
<g transform="rotate(8 319 481.500)">
<ellipse cx="322" cy="488" rx="57" ry="30" stroke="#9a9a9a" stroke-width="7" opacity=".5" filter="url(#rb)"/>
<ellipse cx="319.500" cy="484" rx="55.500" ry="31" stroke="url(#rg2)" stroke-width="5" filter="url(#rb2)"/>
<ellipse cx="319" cy="481.500" rx="55.500" ry="31" stroke="url(#rg)" stroke-width="3.600" filter="url(#rb2)"/>
<ellipse cx="319" cy="480.200" rx="54.500" ry="30" stroke="#eaf7fd" stroke-width="1.200" opacity=".9"/>
</g>
<g transform="rotate(11 319 481.500)" filter="url(#rb2)">
<ellipse cx="320" cy="480.800" rx="56" ry="30" stroke="#73858f" stroke-width="1.100" opacity=".8" stroke-dasharray="120 45 90 20"/>
</g>
<g transform="rotate(5 319 481.500)" filter="url(#rb2)">
<ellipse cx="318.500" cy="483.500" rx="54.500" ry="31.500" stroke="#7c939f" stroke-width="1.300" opacity=".75" stroke-dasharray="60 30 100 80"/>
</g>
<ellipse cx="319" cy="487" rx="10" ry="4" fill="#ddd" opacity=".5" filter="url(#rb)"/>
<path d="M315.300 477.200l1.700 2.800 1.500-2.500 1.500 3 1.900-2.600" stroke="#8fd0ea" stroke-width="1.500"/>
<!-- selection -->
<rect x="246.250" y="435.750" width="149" height="97" stroke="#8c8c8c" stroke-width="1"/>
<path d="M320.750 411V431" stroke="#8c8c8c" stroke-width="1"/>
<g fill="#fff" stroke="#8c8c8c" stroke-width="1.500">
<circle cx="246.250" cy="435.750" r="4.500"/><circle cx="320.750" cy="435.750" r="4.500"/><circle cx="395.250" cy="435.750" r="4.500"/>
<circle cx="246.250" cy="484.250" r="4.500"/><circle cx="395.250" cy="484.250" r="4.500"/>
<circle cx="246.250" cy="532.750" r="4.500"/><circle cx="320.750" cy="532.750" r="4.500"/><circle cx="395.250" cy="532.750" r="4.500"/>
</g>
<!-- rotate handle -->
<path d="M326.750 409.080A9.500 9.500 0 1 1 330.600 399.400L336.700 399.400 329.300 406.700 321.100 399.300 326.100 399.300A5.200 5.200 0 1 0 324.280 405.560z" fill="#fff" stroke="#8a8a8a" stroke-width="1.600" stroke-linejoin="miter"/>
</svg>
<!-- s_drop -->
<div style="left:404px;top:157px;width:304.500px;height:90px;background:#fff;border:1px solid #c6c6c6"></div>
<div style="left:505.500px;top:159px;width:49px;height:70px;background:#c6c6c6"></div>
<div class="t" style="left:411.50px;top:197.00px;font-size:12.4px;line-height:16px;color:#444;white-space:nowrap;letter-spacing:-0.611px;">Cuadro</div>
<div class="t" style="left:409.50px;top:213.00px;font-size:12.4px;line-height:16px;color:#444;white-space:nowrap;letter-spacing:-0.515px;">de texto</div>
<div class="t" style="left:456.50px;top:197.00px;font-size:12.4px;line-height:16px;color:#444;white-space:nowrap;letter-spacing:-0.962px;">Encabez.</div>
<div class="t" style="left:458.50px;top:213.00px;font-size:12.4px;line-height:16px;color:#444;white-space:nowrap;letter-spacing:-0.465px;">pie pág.</div>
<div class="t" style="left:506.90px;top:197.00px;font-size:12.4px;line-height:16px;color:#444;white-space:nowrap;letter-spacing:-0.178px;">WordArt</div>
<svg style="left:526.500px;top:219px" width="6" height="3" viewBox="0 0 6 3"><path d="M0 0h6l-3 3z" fill="#444"/></svg>
<div class="t" style="left:559.90px;top:197.00px;font-size:12.4px;line-height:16px;color:#444;white-space:nowrap;letter-spacing:-0.572px;">Fecha</div>
<div class="t" style="left:558.50px;top:213.00px;font-size:12.4px;line-height:16px;color:#444;white-space:nowrap;letter-spacing:-0.577px;">y hora</div>
<div class="t" style="left:598.00px;top:197.00px;font-size:12.4px;line-height:16px;color:#444;white-space:nowrap;letter-spacing:-0.093px;">Número de</div>
<div class="t" style="left:601.10px;top:213.00px;font-size:12.4px;line-height:16px;color:#444;white-space:nowrap;letter-spacing:-0.235px;">diapositiva</div>
<div class="t" style="left:665.50px;top:197.00px;font-size:12.4px;line-height:16px;color:#444;white-space:nowrap;letter-spacing:-0.355px;">Objeto</div>
<svg style="left:404px;top:158px" width="305" height="40" viewBox="404 158 305 40" fill="none">
<!-- cuadro -->
<rect x="416.500" y="165.500" width="27" height="24" fill="#fff" stroke="#8a8a8a" stroke-width="1"/>
<text x="419.300" y="177.500" font-family="Liberation Sans" font-weight="bold" font-size="11" fill="#3f78c0">A</text>
<path d="M430 170.500h11M430 173.500h11M430 176.500h11M419.500 180.500h21.500M419.500 183.500h21.500M419.500 186.500h21.500" stroke="#9a9a9a" stroke-width="1"/>
<!-- encabez -->
<path d="M469.500 164.500h13.500l6.500 6.500v20.500h-20z" fill="#fff" stroke="#8a8a8a" stroke-width="1"/><path d="M483 164.500v6.500h6.500" stroke="#8a8a8a" stroke-width="1"/>
<rect x="472" y="167.400" width="8" height="3.800" fill="#f0c468"/><rect x="472" y="184.600" width="15" height="3.600" fill="#f0c468"/>
<!-- wordart A -->
<path d="M518.800 182.800L536.600 166.800c.5-.4 1-.2 1 .5L536 188.500" stroke="#4a86c8" stroke-width="3.300" stroke-linecap="round" stroke-linejoin="round"/><path d="M523 181.300l14.500-2.600" stroke="#4a86c8" stroke-width="2.800" stroke-linecap="round"/>
<!-- calendar -->
<rect x="562.500" y="166" width="25" height="22" fill="#fff" stroke="#9a9a9a" stroke-width="1"/><rect x="562" y="165.400" width="26" height="3.800" fill="#707070"/>
<path d="M568.700 169v19M574.900 169v19M581.100 169v19M562.500 175h25M562.500 181.500h25" stroke="#9a9a9a" stroke-width="1"/>
<rect x="567.500" y="173.700" width="5.500" height="5.500" fill="#fff" stroke="#e8915a" stroke-width="1.300"/>
<circle cx="583.600" cy="183" r="6.800" fill="#fff" stroke="#3f78c0" stroke-width="1.200"/><path d="M583.600 178.500v4.800h3.600" stroke="#555" stroke-width="1.100"/>
<!-- numero -->
<rect x="616" y="166.500" width="27" height="21.500" rx="2" fill="#fff" stroke="#8a8a8a" stroke-width="1"/>
<path d="M620 170.500h2M623.500 170.500h15.500M620 173.500h2M623.500 173.500h15.500" stroke="#9a9a9a" stroke-width="1"/>
<text x="624.800" y="186" font-family="Liberation Sans" font-weight="bold" font-style="italic" font-size="13" fill="#3f78c0">#</text>
<!-- objeto -->
<path d="M675.500 164.500h13.500l7 7v19.500h-20.500z" fill="#fff" stroke="#8a8a8a" stroke-width="1"/><path d="M689 164.500v7h7" stroke="#8a8a8a" stroke-width="1"/>
<rect x="669.500" y="172.500" width="14" height="12" fill="#fff" stroke="#3f78c0" stroke-width="1.200"/><rect x="669" y="172" width="15" height="3.500" fill="#3f78c0"/>
</svg>
<!-- s_gallery -->
<div style="left:409px;top:228px;width:301px;height:238px;background:#fdf8f4;border:4px solid #ea8c39"></div>
<svg style="left:412px;top:231px" width="295" height="232" viewBox="412 231 295 232" font-family="Liberation Sans"><defs>
<filter id="sh1" x="-30%" y="-30%" width="160%" height="160%"><feDropShadow dx=".6" dy="1" stdDeviation=".8" flood-color="#000" flood-opacity=".4"/></filter>
<filter id="sh2" x="-30%" y="-30%" width="160%" height="160%"><feDropShadow dx="0" dy="1.200" stdDeviation=".9" flood-color="#2a6a88" flood-opacity=".45"/></filter>
<filter id="sh3" x="-30%" y="-30%" width="160%" height="160%"><feDropShadow dx="0" dy="1.300" stdDeviation=".8" flood-color="#555" flood-opacity=".5"/></filter>
<filter id="shs" x="-30%" y="-30%" width="160%" height="160%"><feDropShadow dx=".8" dy="1.200" stdDeviation="1" flood-color="#000" flood-opacity=".4"/></filter>
<linearGradient id="g21" gradientUnits="userSpaceOnUse" x1="0" y1="-29" x2="0" y2="0"><stop offset="0" stop-color="#6a6a6a"/><stop offset="1" stop-color="#cacaca"/></linearGradient>
<linearGradient id="g22" gradientUnits="userSpaceOnUse" x1="0" y1="-29" x2="0" y2="0"><stop offset="0" stop-color="#587888"/><stop offset="1" stop-color="#a9ccd4"/></linearGradient>
<linearGradient id="g23" gradientUnits="userSpaceOnUse" x1="0" y1="-29" x2="0" y2="0"><stop offset="0" stop-color="#d8dada"/><stop offset="1" stop-color="#bcbebe"/></linearGradient>
<linearGradient id="g35" x1="0" y1="0" x2="1" y2="1"><stop offset="0" stop-color="#dde5ea"/><stop offset="1" stop-color="#c0ccd6"/></linearGradient>
<linearGradient id="rfg" gradientUnits="userSpaceOnUse" x1="0" y1="0" x2="0" y2="9"><stop offset="0" stop-color="#a9c6d0" stop-opacity=".6"/><stop offset="1" stop-color="#a9c6d0" stop-opacity="0"/></linearGradient>
<pattern id="p41" width="3.400" height="3.400" patternUnits="userSpaceOnUse" patternTransform="rotate(-45)"><rect width="3.400" height="3.400" fill="#8c8c8c"/><rect width="3.400" height="1.900" fill="#3e3e3e"/></pattern>
<pattern id="p42" width="4" height="2.500" patternUnits="userSpaceOnUse"><rect width="4" height="2.500" fill="#cdeadf"/><rect width="4" height="1.300" fill="#55a48c"/></pattern>
<pattern id="p43" width="1.600" height="1.600" patternUnits="userSpaceOnUse"><rect width="1.600" height="1.600" fill="#3a98c0"/><rect width=".8" height=".8" fill="#bfe0ee"/><rect x=".8" y=".8" width=".8" height=".8" fill="#bfe0ee"/></pattern>
<pattern id="p44" width="3.600" height="3.600" patternUnits="userSpaceOnUse" patternTransform="rotate(-45)"><rect width="3.600" height="3.600" fill="#fefefe"/><rect width="3.600" height=".8" fill="#a8c8cc"/></pattern>
<pattern id="p45" width="3.200" height="3.200" patternUnits="userSpaceOnUse" patternTransform="rotate(-45)"><rect width="3.200" height="3.200" fill="#22222a"/><rect width="3.200" height="1.100" fill="#f0f0f0"/></pattern>
</defs><g transform="translate(437.7 275) scale(0.895 1)"><text x="0" y="0" text-anchor="middle" font-size="41.9"  fill="#0c0a0a" stroke="#0c0a0a" stroke-width=".5" filter="url(#sh1)">A</text></g>
<g transform="translate(494.5 275) scale(0.895 1)"><text x="0" y="0" text-anchor="middle" font-size="41.9"  fill="#3f96b8" stroke="#3f96b8" stroke-width=".5" filter="url(#sh2)">A</text></g>
<g transform="translate(550.3 275.2) scale(0.89 1)"><text x="0" y="0" text-anchor="middle" font-size="40" font-weight="bold" fill="#b8dfe2" stroke="#4fb0b8" stroke-width="2.400" stroke-linejoin="round">A</text></g>
<g transform="translate(550.3 275.2) scale(0.89 1)"><text x="0" y="0" text-anchor="middle" font-size="40" font-weight="bold" fill="#b8dfe2" stroke="#93d0d4" stroke-width=".9" stroke-linejoin="round">A</text></g>
<g transform="translate(606.2 275.8) scale(0.86 1)"><text x="0" y="0" text-anchor="middle" font-size="42" font-weight="bold" fill="#fff" stroke="#8fb0b4" stroke-width="1" filter="url(#sh3)">A</text></g>
<g transform="translate(661.4 275) scale(0.86 1)"><text x="0" y="0" text-anchor="middle" font-size="42.5"  fill="#3a5560" stroke="#3a5560" stroke-width=".8">A</text></g>
<g transform="translate(662.1 274.7) scale(0.86 1)"><text x="0" y="0" text-anchor="middle" font-size="42.5"  fill="#a8b4b4" stroke="#a8b4b4" stroke-width=".8">A</text></g>
<g transform="translate(663.1 274.7) scale(0.86 1)"><text x="0" y="0" text-anchor="middle" font-size="42.5"  fill="#6e7878" stroke="#6e7878" stroke-width=".8">A</text></g>
<g transform="translate(438.6 330.7) scale(0.895 1)"><text x="0" y="0" text-anchor="middle" font-size="41.4"  fill="url(#g21)" stroke="url(#g21)" stroke-width=".4">A</text></g>
<g transform="translate(494.5 329.5) scale(0.895 1)"><text x="0" y="0" text-anchor="middle" font-size="41.4"  fill="url(#g22)" stroke="url(#g22)" stroke-width=".4">A</text></g>
<mask id="rm" maskUnits="userSpaceOnUse" x="-30" y="-2" width="60" height="40"><g transform="scale(1 -1)"><text x="0" y="0" text-anchor="middle" font-size="41.400" fill="#fff" stroke="#fff" stroke-width=".4">A</text></g></mask>
<g transform="translate(494.500 330) scale(0.895 1)"><rect x="-20" y="0" width="40" height="9" fill="url(#rfg)" mask="url(#rm)"/></g>
<g transform="translate(550.2 331.3) scale(0.84 1)"><text x="0" y="0" text-anchor="middle" font-size="42" font-weight="bold" fill="url(#g23)" stroke="#8a9090" stroke-width=".9">A</text></g>
<g transform="translate(606.3 331.3) scale(0.86 1)"><text x="0" y="0" text-anchor="middle" font-size="40" font-weight="bold" fill="#fff" stroke="#4aa0c8" stroke-width="2.600" stroke-linejoin="round">A</text></g>
<g transform="translate(606.3 331.3) scale(0.86 1)"><text x="0" y="0" text-anchor="middle" font-size="40" font-weight="bold" fill="#fff" stroke="#fff" stroke-width="1.100" stroke-linejoin="round">A</text></g>
<g transform="translate(606.3 331.3) scale(0.86 1)"><text x="0" y="0" text-anchor="middle" font-size="40" font-weight="bold" fill="#fff" stroke="#6ab4d8" stroke-width=".5">A</text></g>
<g transform="translate(663.4 331.6) scale(0.86 1)"><text x="0" y="0" text-anchor="middle" font-size="42.5"  fill="#3a7a68" stroke="#3a7a68" stroke-width="1.300">A</text></g>
<g transform="translate(661.6 331.3) scale(0.86 1)"><text x="0" y="0" text-anchor="middle" font-size="42.5"  fill="#8fd0b8" stroke="#8fd0b8" stroke-width="1.300">A</text></g>
<g transform="translate(662.5 331.3) scale(0.86 1)"><text x="0" y="0" text-anchor="middle" font-size="42.5"  fill="#5aa890" stroke="#5aa890" stroke-width="1.300">A</text></g>
<g transform="translate(440.4 388.1) scale(0.885 1)"><text x="0" y="0" text-anchor="middle" font-size="39.7" font-weight="bold" fill="#8a8a8a">A</text></g>
<g transform="translate(439.3 386.9) scale(0.885 1)"><text x="0" y="0" text-anchor="middle" font-size="39.7" font-weight="bold" fill="#fdf8f4" stroke="#fdf8f4" stroke-width=".5">A</text></g>
<g transform="translate(438.3 385.8) scale(0.885 1)"><text x="0" y="0" text-anchor="middle" font-size="39.7" font-weight="bold" fill="#100e0e">A</text></g>
<g transform="translate(497 387.8) scale(0.885 1)"><text x="0" y="0" text-anchor="middle" font-size="39.7" font-weight="bold" fill="#8fc0cc">A</text></g>
<g transform="translate(495.8 386.8) scale(0.885 1)"><text x="0" y="0" text-anchor="middle" font-size="39.7" font-weight="bold" fill="#fdf8f4" stroke="#fdf8f4" stroke-width=".4">A</text></g>
<g transform="translate(494.5 385.8) scale(0.885 1)"><text x="0" y="0" text-anchor="middle" font-size="39.7" font-weight="bold" fill="#2a2624">A</text></g>
<g transform="translate(553.1 388.8) scale(0.885 1)"><text x="0" y="0" text-anchor="middle" font-size="39.7" font-weight="bold" fill="#c8dce0">A</text></g>
<g transform="translate(551.9 387.5) scale(0.885 1)"><text x="0" y="0" text-anchor="middle" font-size="39.7" font-weight="bold" fill="#fdf8f4" stroke="#fdf8f4" stroke-width=".4">A</text></g>
<g transform="translate(550.5 386) scale(0.885 1)"><text x="0" y="0" text-anchor="middle" font-size="39.7" font-weight="bold" fill="#8ab0ba">A</text></g>
<g transform="translate(608.8 388.3) scale(0.885 1)"><text x="0" y="0" text-anchor="middle" font-size="39.7" font-weight="bold" fill="#4fb0b8" stroke="#4fb0b8" stroke-width="1">A</text></g>
<g transform="translate(607.7 387.2) scale(0.885 1)"><text x="0" y="0" text-anchor="middle" font-size="39.7" font-weight="bold" fill="#4fb0b8">A</text></g>
<g transform="translate(606.5 386) scale(0.885 1)"><text x="0" y="0" text-anchor="middle" font-size="39.7" font-weight="bold" fill="#fff" stroke="#4fb0b8" stroke-width="1">A</text></g>
<g transform="translate(661 386.9) scale(0.885 1)"><text x="0" y="0" text-anchor="middle" font-size="41" font-weight="bold" fill="#8a9094">A</text></g>
<g transform="translate(662.6 386.7) scale(0.885 1)"><text x="0" y="0" text-anchor="middle" font-size="41" font-weight="bold" fill="url(#g35)">A</text></g>
<g transform="translate(438.5 442.3) scale(0.885 1)"><text x="0" y="0" text-anchor="middle" font-size="40.8" font-weight="bold" fill="url(#p41)" filter="url(#shs)">A</text></g>
<g transform="translate(494.4 442.5) scale(0.87 1)"><text x="0" y="0" text-anchor="middle" font-size="41.5" font-weight="bold" fill="url(#p42)" stroke="#2f7a64" stroke-width="1.200" stroke-linejoin="round">A</text></g>
<g transform="translate(552.3 444.5) scale(0.88 1)"><text x="0" y="0" text-anchor="middle" font-size="42" font-weight="bold" fill="#2f86ae" stroke="#2f86ae" stroke-width="1.600" stroke-linejoin="round">A</text></g>
<g transform="translate(551 443) scale(0.88 1)"><text x="0" y="0" text-anchor="middle" font-size="42" font-weight="bold" fill="url(#p43)" stroke="#3a98c0" stroke-width="1.500" stroke-linejoin="round">A</text></g>
<g transform="translate(606.2 443.2) scale(0.85 1)"><text x="0" y="0" text-anchor="middle" font-size="43" font-weight="bold" fill="url(#p44)" stroke="#9cc4c8" stroke-width=".9">A</text></g>
<g transform="translate(663.8 444.5) scale(0.9 1)"><text x="0" y="0" text-anchor="middle" font-size="42" font-weight="bold" fill="#22222a" stroke="#22222a" stroke-width="1.600" stroke-linejoin="round">A</text></g>
<g transform="translate(662.6 443) scale(0.9 1)"><text x="0" y="0" text-anchor="middle" font-size="42" font-weight="bold" fill="url(#p45)" stroke="#22222a" stroke-width="1.300" stroke-linejoin="round">A</text></g>
<g fill="#8a8a8a"><rect x="702.500" y="457" width="1.500" height="1.500"/><rect x="700" y="459.500" width="1.500" height="1.500"/><rect x="702.500" y="459.500" width="1.500" height="1.500"/></g>
</svg>
<!-- s_call -->
<svg style="left:99.1px;top:58.8px" width="53.8" height="66.8" viewBox="99.1 58.8 53.8 66.8"><defs><filter id="cs126" x="-30%" y="-30%" width="160%" height="160%"><feDropShadow dx="1.500" dy="2" stdDeviation="1.600" flood-color="#000" flood-opacity=".42"/></filter></defs><g filter="url(#cs126)" fill="#ea8c39"><circle cx="126" cy="98.7" r="18.9"/><path d="M119.85 80.83Q124.31 73.81 126.00 66.80Q127.69 73.81 132.15 80.83z"/></g><path d="M129.800 92.500V109H124.800V98.200L122 99.600 120.700 96.400 125.900 92.500z" fill="#fff"/></svg>
<svg style="left:429.6px;top:87.1px" width="67.6" height="53.6" viewBox="429.6 87.1 67.6 53.6"><defs><filter id="cs456" x="-30%" y="-30%" width="160%" height="160%"><feDropShadow dx="1.500" dy="2" stdDeviation="1.600" flood-color="#000" flood-opacity=".42"/></filter></defs><g filter="url(#cs456)" fill="#ea8c39"><circle cx="456.4" cy="113.9" r="18.8"/><path d="M474.19 107.83Q481.69 112.29 489.20 114.00Q481.68 115.66 474.16 120.07z"/></g><text x="458.2" y="123.8" text-anchor="middle" font-family="Liberation Sans" font-weight="bold" font-size="24.400" fill="#fff">2</text></svg>
<svg style="left:548px;top:178.15px" width="67.1" height="53.2" viewBox="548 178.15 67.1 53.2"><defs><filter id="cs588" x="-30%" y="-30%" width="160%" height="160%"><feDropShadow dx="1.500" dy="2" stdDeviation="1.600" flood-color="#000" flood-opacity=".42"/></filter></defs><g filter="url(#cs588)" fill="#ea8c39"><circle cx="588.5" cy="204.75" r="18.6"/><path d="M570.92 210.83Q563.46 206.45 556.00 204.80Q563.45 203.12 570.90 198.72z"/></g><text x="587.9" y="214.65" text-anchor="middle" font-family="Liberation Sans" font-weight="bold" font-size="24.400" fill="#fff">3</text></svg>
<svg style="left:703px;top:320.4px" width="67.3" height="53.4" viewBox="703 320.4 67.3 53.4"><defs><filter id="cs743" x="-30%" y="-30%" width="160%" height="160%"><feDropShadow dx="1.500" dy="2" stdDeviation="1.600" flood-color="#000" flood-opacity=".42"/></filter></defs><g filter="url(#cs743)" fill="#ea8c39"><circle cx="743.6" cy="347.1" r="18.7"/><path d="M725.86 353.03Q718.44 348.54 711.00 346.80Q718.48 345.19 725.98 340.85z"/></g><text x="743.2" y="357" text-anchor="middle" font-family="Liberation Sans" font-weight="bold" font-size="24.400" fill="#fff">4</text></svg>
<!-- s_status -->
<div style="left:0;top:577px;width:800px;height:23px;background:#f1f1f1"></div>
<div style="left:0;top:576.500px;width:800px;height:1px;background:#d6d6d6"></div>
<div style="left:439.500px;top:577.500px;width:37.500px;height:21px;background:#c6c6c6"></div>
<div class="t" style="left:734.20px;top:581.00px;font-size:12px;line-height:16px;color:#555;white-space:nowrap;letter-spacing:-1.339px;">46%</div>
<svg style="left:430px;top:577px" width="370" height="23" viewBox="430 577 370 23" fill="none" stroke="#555" stroke-width="1.100">
<!-- normal view -->
<rect x="452" y="581.200" width="13" height="12" stroke-width="1.200"/><path d="M455 581.200v12M455 590.200h10" stroke-width="1.200"/><rect x="457" y="583.300" width="5.500" height="3.600" stroke-width="1"/>
<!-- sorter -->
<rect x="489.600" y="581.700" width="5" height="4.600"/><rect x="497.600" y="581.700" width="5" height="4.600"/><rect x="489.600" y="589.100" width="5" height="4.600"/><rect x="497.600" y="589.100" width="5" height="4.600"/>
<!-- reading -->
<path d="M533.700 582.700c-2-1.300-4.200-1.300-6.200-.5v10c2-.8 4.200-.8 6.200.7zM533.700 582.700c2-1.300 4.200-1.300 6.200-.5v10c-2-.8-4.200-.8-6.200.7z"/><path d="M533.700 582.700v11.600" stroke-width="1.300"/><path d="M529 584.400h3.200M529 586.200h3.200M529 588h3.200M529 589.800h3.200M535.300 584.400h3.200M535.300 586.200h3.200M535.300 588h3.200M535.300 589.800h3.200" stroke-width=".8"/>
<!-- slideshow -->
<path d="M565 582.600h12.800" stroke-width="1.600"/><path d="M567 583v6.800h8.800v-6.800M571.400 590v3M568.800 593.500h5.200"/>
<!-- zoom -->
<path d="M595.800 588h5.700" stroke-width="1.900"/><path d="M606 587.500h99" stroke="#8a8a8a" stroke-width="1"/><path d="M656.500 585v5" stroke="#8a8a8a" stroke-width="1"/>
<rect x="626" y="582" width="4" height="11" fill="#555" stroke="none"/>
<path d="M710 588h8M714 584v8" stroke-width="1.600"/>
<!-- fit -->
<rect x="768.500" y="582.500" width="12.500" height="12"/><path d="M774.750 584.500v3M773.500 585.700l1.250-1.400 1.250 1.400M774.750 592.500v-3M773.500 591.300l1.250 1.400 1.250-1.400M770.500 588.500h3M771.700 587.300l-1.400 1.200 1.400 1.200M779 588.500h-3M777.800 587.300l1.400 1.200-1.400 1.200" stroke-width=".9"/>
</svg>
<div style="left:0;top:66px;width:1.500px;height:534px;background:#b7472a"></div>
<div style="left:798.500px;top:66px;width:1.500px;height:534px;background:#b7472a"></div>
<div style="left:0;top:598.500px;width:800px;height:1.500px;background:#b7472a"></div>
</div>
</body></html>
